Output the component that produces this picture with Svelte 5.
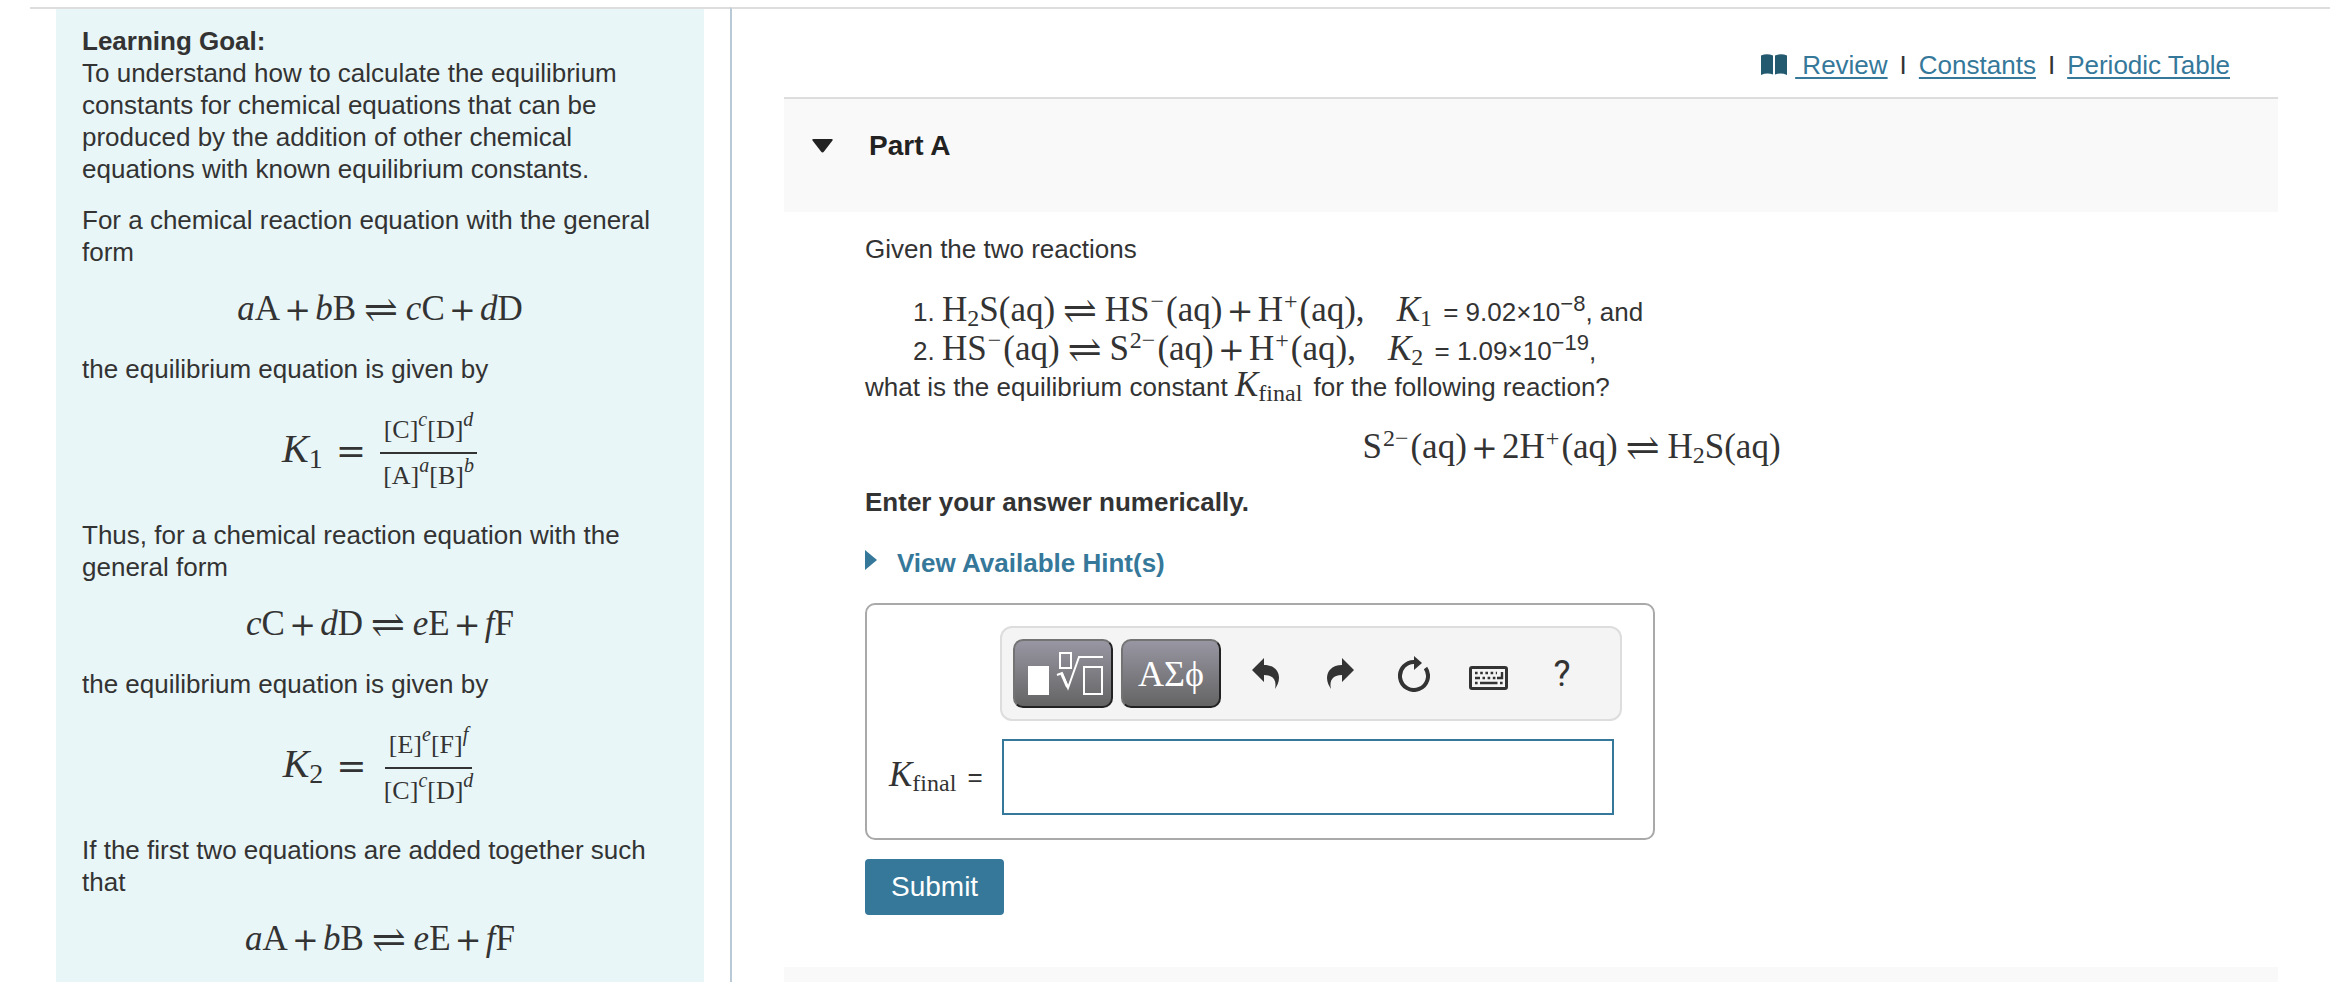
<script lang="ts">
  let partOpen = $state(true);
  let hintsOpen = $state(false);
  let answer = $state('');
</script>

{#snippet op(symbol: string)}
  <span class="op">{symbol}</span>
{/snippet}

{#snippet rel(symbol: string)}
  <span class="op rel">{symbol}</span>
{/snippet}

<div class="page">
  <div class="columns">
    <aside class="intro">
      <div class="intro-panel">
        <p>
          <strong>Learning Goal:</strong><br />
          To understand how to calculate the equilibrium constants for chemical equations that can be
          produced by the addition of other chemical equations with known equilibrium constants.
        </p>
        <p class="spaced">For a chemical reaction equation with the general form</p>
        <div class="equation math">
          <span><i>a</i>A</span>{@render op('+')}<span><i>b</i>B</span>{@render rel('⇌')}<span><i>c</i>C</span>{@render op('+')}<span><i>d</i>D</span>
        </div>
        <p>the equilibrium equation is given by</p>
        <div class="ratio math">
          <span class="lead"><i>K</i><sub>1</sub></span>
          <span class="equals">=</span>
          <span class="fraction">
            <span>[C]<sup><i>c</i></sup>[D]<sup><i>d</i></sup></span>
            <span>[A]<sup><i>a</i></sup>[B]<sup><i>b</i></sup></span>
          </span>
        </div>
        <p>Thus, for a chemical reaction equation with the general form</p>
        <div class="equation math">
          <span><i>c</i>C</span>{@render op('+')}<span><i>d</i>D</span>{@render rel('⇌')}<span><i>e</i>E</span>{@render op('+')}<span><i>f</i>F</span>
        </div>
        <p>the equilibrium equation is given by</p>
        <div class="ratio math">
          <span class="lead"><i>K</i><sub>2</sub></span>
          <span class="equals">=</span>
          <span class="fraction">
            <span>[E]<sup><i>e</i></sup>[F]<sup><i>f</i></sup></span>
            <span>[C]<sup><i>c</i></sup>[D]<sup><i>d</i></sup></span>
          </span>
        </div>
        <p>If the first two equations are added together such that</p>
        <div class="equation math">
          <span><i>a</i>A</span>{@render op('+')}<span><i>b</i>B</span>{@render rel('⇌')}<span><i>e</i>E</span>{@render op('+')}<span><i>f</i>F</span>
        </div>
      </div>
    </aside>

    <main class="work">
      <nav class="resources">
        <svg class="book" viewBox="0 0 26 22" aria-hidden="true">
          <path d="M0 1.5Q6 -1 12 1.5V20.5Q6 18.5 0 21Z" />
          <path d="M14 1.5Q20 -1 26 1.5V21Q20 18.5 14 20.5Z" />
        </svg>
        <a href="#review">&nbsp;Review</a>
        <span class="bar">I</span>
        <a href="#constants">Constants</a>
        <span class="bar">I</span>
        <a href="#periodic-table">Periodic Table</a>
      </nav>

      <button class="part-header" aria-expanded={partOpen} onclick={() => (partOpen = !partOpen)}>
        <svg class="caret" viewBox="0 0 21 14" aria-hidden="true">
          <path d="M1.5 0H19.5Q21.5 0 20.3 1.7L12 12.5Q10.5 14.5 9 12.5L.7 1.7Q-.5 0 1.5 0Z" />
        </svg>
        Part A
      </button>

      {#if partOpen}
        <section class="part-body">
          <p>Given the two reactions</p>
          <ol>
            <li>
              <span class="inline math">
                <span>H<sub>2</sub>S(aq)</span>{@render rel('⇌')}<span>HS<sup>−</sup>(aq)</span>{@render op('+')}<span>H<sup>+</sup>(aq),</span>
                <span class="constant"><i>K</i><sub>1</sub></span>
              </span>
              = 9.02×10<sup>−8</sup>, and
            </li>
            <li>
              <span class="inline math">
                <span>HS<sup>−</sup>(aq)</span>{@render rel('⇌')}<span>S<sup>2−</sup>(aq)</span>{@render op('+')}<span>H<sup>+</sup>(aq),</span>
                <span class="constant"><i>K</i><sub>2</sub></span>
              </span>
              = 1.09×10<sup>−19</sup>,
            </li>
          </ol>
          <p>
            what is the equilibrium constant <span class="inline math"><span><i>K</i><sub>final</sub></span></span>
            for the following reaction?
          </p>
          <div class="equation math wide">
            <span>S<sup>2−</sup>(aq)</span>{@render op('+')}<span>2H<sup>+</sup>(aq)</span>{@render rel('⇌')}<span>H<sub>2</sub>S(aq)</span>
          </div>
          <p><strong>Enter your answer numerically.</strong></p>

          <button class="hints" aria-expanded={hintsOpen} onclick={() => (hintsOpen = !hintsOpen)}>
            <svg viewBox="0 0 12 20" aria-hidden="true"><path d="M0 0L12 10L0 20Z" /></svg>
            View Available Hint(s)
          </button>

          <form class="answer" onsubmit={(e) => e.preventDefault()}>
            <div class="answer-box">
              <div class="toolbar">
                <button type="button" class="palette" aria-label="Templates">
                  <svg viewBox="0 0 96 64" aria-hidden="true">
                    <rect x="13" y="24" width="21" height="29" fill="#fff" />
                    <g fill="none" stroke="#fff" stroke-width="2">
                      <rect x="45" y="11" width="11" height="15" />
                      <path d="M42 33L47 31L53 46L64 15H88" />
                      <path d="M46.5 31.5L52.5 45" stroke-width="3" />
                      <rect x="69" y="25" width="18" height="27" />
                    </g>
                  </svg>
                </button>
                <button type="button" class="palette" aria-label="Symbols">ΑΣϕ</button>
                <div class="tools">
                  <button type="button" aria-label="Undo">
                    <svg width="28" height="32" viewBox="0 0 28 32" aria-hidden="true">
                      <path d="M0 12L12 0V7C22 7 27 13 27 20C27 24 25 28 23 31C25 22 21 17 12 17V24Z" />
                    </svg>
                  </button>
                  <button type="button" aria-label="Redo">
                    <svg width="28" height="32" viewBox="0 0 28 32" aria-hidden="true">
                      <path d="M28 12L16 0V7C6 7 1 13 1 20C1 24 3 28 5 31C3 22 7 17 16 17V24Z" />
                    </svg>
                  </button>
                  <button type="button" aria-label="Reset">
                    <svg width="32" height="36" viewBox="0 0 32 36" aria-hidden="true">
                      <path d="M17 6A14 14 0 1 0 27.500 12" fill="none" stroke="#333" stroke-width="4" />
                      <path d="M16 0L24 7L16 14Z" />
                    </svg>
                  </button>
                  <button type="button" class="keyboard" aria-label="Keyboard shortcuts">
                    <svg width="39" height="24" viewBox="0 0 39 24" aria-hidden="true">
                      <rect x="1.5" y="1.5" width="36" height="21" rx="1.5" fill="none" stroke="#333" stroke-width="3" />
                      <path d="M6 7H28" fill="none" stroke="#333" stroke-width="2.4" stroke-dasharray="2.6 2.6" />
                      <path d="M6 12H11M13.5 12H16M18.6 12H21.2M23.8 12H26.4M28 12H33V6" fill="none" stroke="#333" stroke-width="2.4" />
                      <path d="M6 17H8.6M11 17H28.5M31 17H33.6" fill="none" stroke="#333" stroke-width="2.4" />
                    </svg>
                  </button>
                  <button type="button" class="help" aria-label="Help">?</button>
                </div>
              </div>
              <label for="answer">
                <span class="inline math"><span><i>K</i><sub>final</sub></span></span> =
              </label>
              <input id="answer" type="text" autocomplete="off" bind:value={answer} />
            </div>
            <button type="submit" class="submit">Submit</button>
          </form>
        </section>
      {/if}

      <div class="next-part"></div>
    </main>
  </div>
</div>

<style>
  :global(body) {
    background: #fff;
    color: #333;
    font: 26px/32px "Liberation Sans", Arial, Helvetica, sans-serif;
  }

  .page {
    display: flex;
    flex-direction: column;
    box-sizing: border-box;
    height: 100vh;
    padding-top: 7px;
    overflow: hidden;
  }

  .columns {
    display: grid;
    grid-template-columns: minmax(0, 73fr) minmax(0, 160fr);
    flex: 1;
    min-height: 0;
  }

  p {
    margin: 0;
  }

  button,
  input {
    font: inherit;
    color: inherit;
  }

  button {
    padding: 0;
    border: 0;
    background: none;
    cursor: pointer;
  }

  sub,
  sup {
    font-size: 22px;
    line-height: 0;
  }

  sub {
    vertical-align: -5px;
  }

  sup {
    vertical-align: 10px;
  }

  .intro {
    display: flex;
    margin-left: 30px;
    padding: 0 26px;
    border-top: 2px solid #ddd;
    min-height: 0;
  }

  .intro-panel {
    flex: 1;
    padding: 16px 26px;
    background: #e9f6f7;
  }

  .spaced {
    margin-top: 19px;
  }

  .math {
    font-family: "Liberation Serif", "Times New Roman", serif;
    font-size: 35px;
  }

  .math sub,
  .math sup {
    font-size: 24px;
  }

  .math sup {
    margin: 0 2px 0 1px;
    vertical-align: 12px;
  }

  .equation {
    display: flex;
    align-items: baseline;
    justify-content: center;
    padding: 21px 0 24px;
    line-height: 40px;
  }

  .equation.wide {
    padding: 24px 0 19px;
  }

  .inline {
    display: inline-flex;
    align-items: baseline;
    margin-right: 4px;
    line-height: 0;
  }

  .op {
    margin: 0 5px;
    font-family: "DejaVu Math TeX Gyre", "DejaVu Serif", serif;
    font-size: 32px;
    line-height: 0;
  }

  .rel {
    margin: 0 7px;
    font-size: 36px;
  }

  .constant {
    margin-left: 32px;
  }

  .ratio {
    display: flex;
    align-items: center;
    justify-content: center;
    padding: 23px 0 21px;
    line-height: 44px;
  }

  .lead {
    padding-bottom: 8px;
    font-size: 40px;
  }

  .lead sub {
    font-size: 28px;
    vertical-align: -6px;
  }

  .equals {
    margin: 0 14px;
    padding-bottom: 4px;
    font-family: "DejaVu Math TeX Gyre", "DejaVu Serif", serif;
    font-size: 36px;
  }

  .fraction {
    display: flex;
    flex-direction: column;
    align-items: center;
    font-size: 26px;
  }

  .fraction > span {
    padding: 0 4px;
  }

  .fraction > span:first-child {
    border-bottom: 2px solid #333;
  }

  .fraction sup {
    margin: 0;
    font-size: 20px;
  }

  .work {
    display: flex;
    flex-direction: column;
    min-height: 0;
    padding: 0 52px;
    border-top: 2px solid #ddd;
    border-left: 2px solid #b9c9d6;
  }

  .resources {
    display: flex;
    justify-content: flex-end;
    align-items: center;
    padding: 40px 48px 16px 0;
  }

  .resources a {
    color: #35789a;
    text-decoration: underline;
    text-decoration-thickness: 2px;
    text-underline-offset: 3px;
  }

  .bar {
    margin: 0 12px;
  }

  .book {
    width: 26px;
    height: 22px;
    margin-right: 8px;
    fill: #245a70;
  }

  .part-header {
    display: flex;
    align-items: center;
    gap: 36px;
    padding: 31px 28px 50px;
    border-top: 2px solid #ddd;
    background: #f9f9f9;
    color: #222;
    font-size: 28px;
    font-weight: 700;
  }

  .caret {
    width: 21px;
    height: 14px;
    fill: #222;
  }

  .part-body {
    padding: 21px 0 52px 81px;
  }

  ol {
    margin: 28px 0 0;
    padding-left: 77px;
    line-height: 39px;
  }

  .hints {
    display: flex;
    align-items: center;
    gap: 20px;
    margin-top: 29px;
    color: #35789a;
    font-weight: 700;
  }

  .hints svg {
    width: 12px;
    height: 20px;
    margin-bottom: 6px;
    fill: #35789a;
  }

  .answer {
    margin-top: 24px;
  }

  .answer-box {
    display: grid;
    grid-template-columns: 133px 1fr;
    row-gap: 18px;
    align-items: center;
    box-sizing: border-box;
    max-width: 790px;
    padding: 21px 31px 23px 0;
    border: 2px solid #a9a9a9;
    border-radius: 10px;
  }

  .toolbar {
    display: flex;
    grid-column: 2;
    gap: 8px;
    padding: 11px;
    border: 2px solid #ddd;
    border-radius: 12px;
    background: #f4f4f4;
  }

  .palette {
    flex: none;
    width: 100px;
    height: 69px;
    border: 2px solid;
    border-color: #737373 #222 #222 #737373;
    border-radius: 10px;
    background: linear-gradient(#9896a2, #646464);
    color: #fff;
    font-family: "Liberation Serif", "Times New Roman", serif;
    font-size: 36px;
  }

  .palette svg {
    display: block;
    width: 96px;
    height: 64px;
  }

  .tools {
    display: flex;
    flex: 1;
  }

  .tools button {
    display: flex;
    align-items: center;
    justify-content: center;
    width: 74px;
  }

  .tools svg {
    fill: #333;
  }

  .tools .keyboard {
    padding-top: 8px;
  }

  .tools .help {
    font-family: Roboto, sans-serif;
    font-size: 36px;
  }

  label {
    padding-left: 22px;
  }

  input {
    box-sizing: border-box;
    height: 76px;
    margin: 0 8px 0 2px;
    padding: 0 12px;
    border: 2px solid #35789a;
    outline: 0;
    background: #fff;
  }

  .submit {
    margin-top: 19px;
    padding: 12px 26px;
    border-radius: 4px;
    background: #35789a;
    color: #fff;
    font-size: 28px;
  }

  .next-part {
    flex: none;
    height: 115px;
    background: #f9f9f9;
  }
</style>
